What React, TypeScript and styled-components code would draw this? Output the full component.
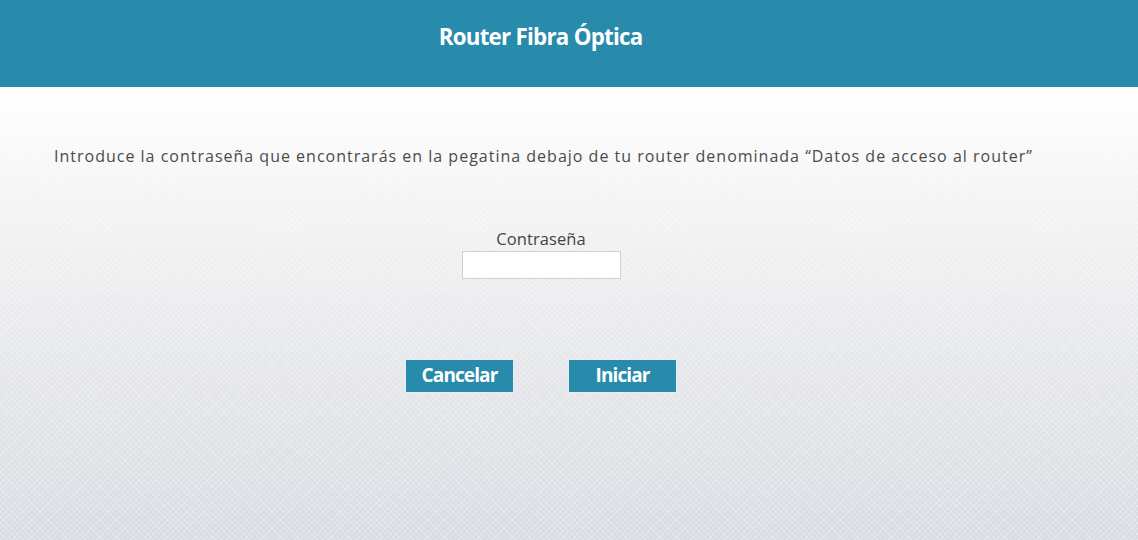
import React from "react";
import styled, { createGlobalStyle } from "styled-components";

const Global = createGlobalStyle`
  html, body { margin: 0; padding: 0; height: 100%; }
  body { font-family: "Open Sans", "Noto Sans", sans-serif; }
  #root { min-height: 100%; }
`;

const Page = styled.div`
  width: 1138px;
  height: 540px;
  overflow: hidden;
  display: flex;
  flex-direction: column;
  background-color: #ffffff;
`;

const Header = styled.header`
  height: 87px;
  flex: none;
  background: #288bab;
  display: flex;
  justify-content: center;
  width: 1082px;
  box-shadow: 56px 0 0 #288bab;
`;

const Title = styled.h1`
  margin: 0;
  padding-top: 19px;
  font-family: "Open Sans", sans-serif;
  font-weight: 700;
  font-size: 24px;
  letter-spacing: -0.8px;
  color: #ffffff;
  transform: scaleX(0.93);
`;

const Body = styled.main`
  flex: 1;
  background-color: #fff;
  background-image:
    repeating-linear-gradient(45deg, rgba(255,255,255,0.22) 0 1px, transparent 1px 4px),
    repeating-linear-gradient(-45deg, rgba(255,255,255,0.22) 0 1px, transparent 1px 4px),
    linear-gradient(180deg, #ffffff 0%, #f4f4f5 25%, #e6e7ea 60%, #d8dce3 100%);
  display: flex;
  flex-direction: column;
  align-items: stretch;
`;

const Content = styled.div`
  width: 1082px;
  display: flex;
  flex-direction: column;
  align-items: center;
`;

const Intro = styled.p`
  align-self: flex-start;
  margin: 58px 0 0 54px;
  font-size: 16px;
  letter-spacing: 1px;
  color: #4a4a4a;
  white-space: nowrap;
`;

const Field = styled.div`
  margin-top: 60px;
  display: flex;
  flex-direction: column;
  align-items: center;
  gap: 1px;
`;

const Label = styled.label`
  font-size: 16.5px;
  color: #444;
  letter-spacing: 0.1px;
`;

const Input = styled.input`
  box-sizing: border-box;
  width: 159px;
  height: 28px;
  border: 1px solid #cfcfcf;
  background: #fff;
  outline: none;
`;

const Actions = styled.div`
  margin-top: 80px;
  display: flex;
  gap: 54px;
`;

const Button = styled.button`
  box-sizing: border-box;
  width: 109px;
  height: 34px;
  border: 1px solid #e6eef2;
  background: #288bab;
  color: #fff;
  font-family: "Open Sans", sans-serif;
  font-weight: 700;
  font-size: 19px;
  letter-spacing: -0.9px;
  padding: 0 0 2px;
  cursor: pointer;
`;

export default function App() {
  return (
    <>
      <Global />
      <Page>
        <Header>
          <Title>Router Fibra Óptica</Title>
        </Header>
        <Body>
          <Content>
            <Intro>
              Introduce la contraseña que encontrarás en la pegatina debajo de tu router denominada “Datos de acceso al router”
            </Intro>
            <Field>
              <Label htmlFor="pwd">Contraseña</Label>
              <Input id="pwd" type="password" />
            </Field>
            <Actions>
              <Button>Cancelar</Button>
              <Button>Iniciar</Button>
            </Actions>
          </Content>
        </Body>
      </Page>
    </>
  );
}
